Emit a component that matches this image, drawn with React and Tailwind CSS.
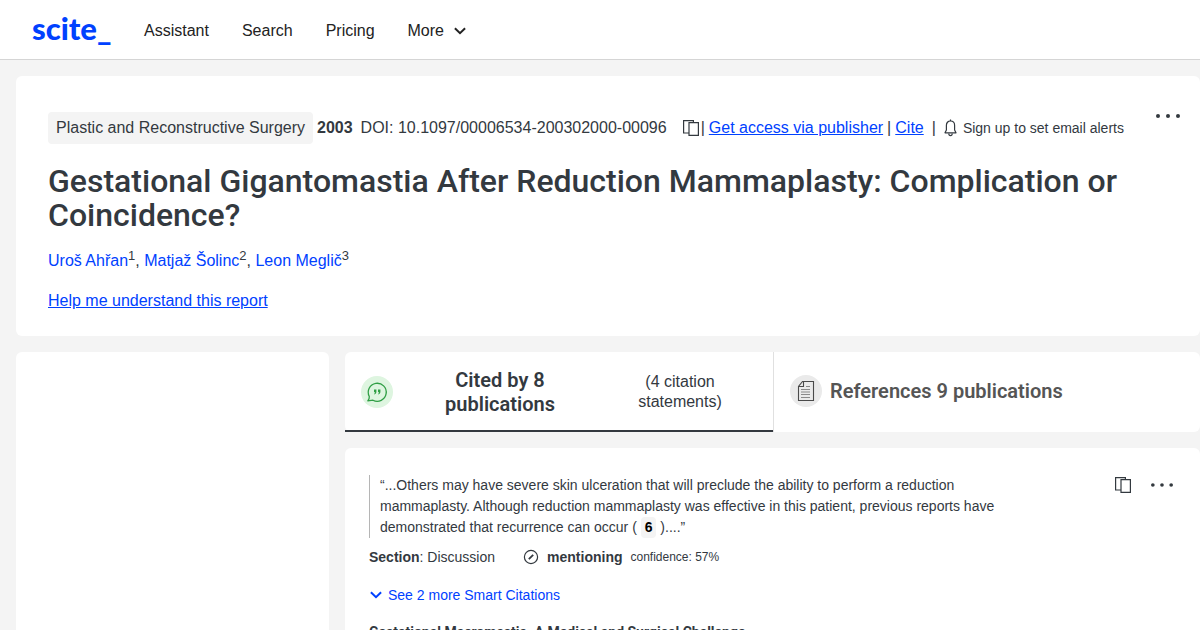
function CopyIcon() {
  return (
    <svg width="16" height="16" viewBox="0 0 16 16" fill="none" stroke="currentColor" strokeWidth="1.2">
      <path d="M6 13H0.600V0.600H10.400V2.400" />
      <path d="M6 2.600H15.400V15.400H6z" />
    </svg>
  );
}

function DotsIcon({ width }) {
  return (
    <svg width={width} height="6" viewBox="0 0 24 6" fill="currentColor">
      <circle cx="2" cy="3" r="2" />
      <circle cx="12" cy="3" r="2" />
      <circle cx="22" cy="3" r="2" />
    </svg>
  );
}

function ChevronIcon() {
  return (
    <svg width="12" height="8" viewBox="0 0 12 8" fill="none" stroke="currentColor" strokeWidth="2">
      <path d="M0.900 1.300L6 6.200L11.100 1.300" />
    </svg>
  );
}

function BellIcon() {
  return (
    <svg width="13" height="18" viewBox="0 0 13 18" fill="none" stroke="currentColor" strokeWidth="1.2">
      <path d="M6.5 2C4 2 2.4 3.900 2.400 6.300V11L1 13.800h11L10.600 11V6.300C10.600 3.900 9 2 6.500 2z" strokeLinejoin="round" />
      <path d="M6.500 0.500V2M4.800 14.500c0 2.800 3.400 2.800 3.400 0" />
    </svg>
  );
}

function QuoteBubbleIcon() {
  return (
    <svg width="32" height="32" viewBox="0 0 32 32" className="shrink-0">
      <circle cx="16" cy="16" r="16" fill="#def5e0" />
      <path d="M8.300 20.500A9 9 0 1 1 12 24.200L6.800 24.800c1-1.200 1.700-2.700 1.500-4.300z" fill="none" stroke="#2f9e44" strokeWidth="1.300" strokeLinejoin="round" />
      <path d="M13 13.500h2.400v2.300c0 1.300-.8 2.200-2 2.600l-.3-.6c.7-.3 1-.8 1-1.500H13zM17 13.500h2.400v2.300c0 1.300-.8 2.200-2 2.600l-.3-.6c.7-.3 1-.8 1-1.500H17z" fill="#2f9e44" />
    </svg>
  );
}

function DocumentIcon() {
  return (
    <svg width="32" height="32" viewBox="0 0 32 32" className="shrink-0">
      <circle cx="16" cy="16" r="16" fill="#eaeaea" />
      <path d="M12.500 6.500h11v19h-15v-14z M13.500 6.500v5h-5" fill="none" stroke="#4a4a4a" strokeWidth="1.100" />
      <path d="M16 11.500h4M11 14.500h9M11 17h9M11 19.500h9M11 22.500h9" stroke="#8a8a8a" strokeWidth="1" />
    </svg>
  );
}

function MentioningIcon() {
  return (
    <svg width="16" height="16" viewBox="0 0 16 16" fill="none" stroke="currentColor">
      <circle cx="8" cy="8" r="6.600" strokeWidth="1.200" />
      <path d="M5.800 10.200l4.400-4.400" strokeWidth="1.800" />
    </svg>
  );
}

const navLinks = ["Assistant", "Search", "Pricing"];

const authors = [
  { name: "Uroš Ahřan", ref: 1 },
  { name: "Matjaž Šolinc", ref: 2 },
  { name: "Leon Meglič", ref: 3 },
];

function Header() {
  return (
    <header className="flex h-[60px] shrink-0 items-center border-b border-[#d5d5d5] bg-white px-8 pt-0.5 text-[#222]">
      <a href="#" className="w-20 pb-1.5 font-['Lato',sans-serif] text-[31px] leading-8 font-black text-[#0041ff]">
        scite_
      </a>
      <nav className="ml-8 flex items-center gap-[33px]">
        {navLinks.map((label) => (
          <a key={label} href="#">
            {label}
          </a>
        ))}
        <button type="button" className="flex items-center gap-2.5">
          More
          <ChevronIcon />
        </button>
      </nav>
    </header>
  );
}

function PaperCard() {
  return (
    <section className="flex shrink-0 items-start rounded-md bg-white pt-9 pr-5 pb-[23px] pl-8">
      <div className="min-w-0 flex-1">
        <div className="flex items-center whitespace-nowrap">
          <span className="rounded bg-[#f4f4f4] px-2 py-1">Plastic and Reconstructive Surgery</span>
          <b className="ml-1">2003</b>
          <span className="ml-2">DOI: 10.1097/00006534-200302000-00096</span>
          <button type="button" aria-label="Copy DOI" className="ml-4">
            <CopyIcon />
          </button>
          <span className="ml-0.5">|</span>
          <a href="#" className="ml-1 text-[#0041ff] underline">Get access via publisher</a>
          <span className="ml-1">|</span>
          <a href="#" className="ml-1 text-[#0041ff] underline">Cite</a>
          <span className="ml-2">|</span>
          <button type="button" className="ml-2 flex items-center gap-1.5 text-sm">
            <BellIcon />
            Sign up to set email alerts
          </button>
        </div>
        <h1 className="mt-5 font-['Roboto',sans-serif] text-[32px] leading-[34px] font-medium">
          Gestational Gigantomastia After Reduction Mammaplasty: Complication or Coincidence?
        </h1>
        <p className="mt-[17px]">
          {authors.map((author, i) => (
            <span key={author.ref}>
              {i > 0 && ", "}
              <a href="#" className="text-[#0041ff]">{author.name}</a>
              <sup className="text-[13px]">{author.ref}</sup>
            </span>
          ))}
        </p>
        <a href="#" className="mt-4 inline-block text-[#0041ff] underline">Help me understand this report</a>
      </div>
      <button type="button" aria-label="More options" className="flex pt-px">
        <DotsIcon width={24} />
      </button>
    </section>
  );
}

function Tabs() {
  return (
    <div className="grid h-20 grid-cols-[1fr_427px] rounded-md bg-white">
      <button type="button" className="flex items-center border-b-2 border-[#33393f] px-4 pt-0.5">
        <QuoteBubbleIcon />
        <span className="flex-1 pr-9 pl-10 font-['Roboto',sans-serif] text-xl leading-6 font-semibold">
          Cited by 8 publications
        </span>
        <span className="w-[154px] px-8 leading-5">(4 citation statements)</span>
      </button>
      <button type="button" className="flex items-center gap-2 border-l border-[#e0e0e0] px-4 pb-0.5 text-[#555]">
        <DocumentIcon />
        <span className="font-['Roboto',sans-serif] text-xl font-semibold">References 9 publications</span>
      </button>
    </div>
  );
}

function Citation() {
  return (
    <article className="mt-4 flex-1 rounded-md bg-white px-6 pt-[27px] text-sm">
      <div className="flex items-start">
        <blockquote className="max-w-[652px] border-l border-[#b5b5b5] pl-[10px] leading-[21px]">
          “...Others may have severe skin ulceration that will preclude the ability to perform a reduction
          mammaplasty. Although reduction mammaplasty was effective in this patient, previous reports have
          demonstrated that recurrence can occur ({" "}
          <a href="#" className="inline-block rounded bg-[#f4f4f4] px-1 font-bold text-black">6</a> )....”
        </blockquote>
        <div className="mr-[3px] ml-auto flex items-center gap-5 pt-0.5">
          <button type="button" aria-label="Copy citation">
            <CopyIcon />
          </button>
          <button type="button" aria-label="Citation options">
            <DotsIcon width={22} />
          </button>
        </div>
      </div>
      <div className="mt-[7px] flex items-center leading-6">
        <span><b>Section</b>: Discussion</span>
        <span className="ml-7 flex items-center gap-2">
          <MentioningIcon />
          <b>mentioning</b>
          <span className="text-xs">confidence: 57%</span>
        </span>
      </div>
      <button type="button" className="mt-[14px] flex items-center gap-1.5 pl-px leading-6 text-[#0041ff]">
        <ChevronIcon />
        See 2 more Smart Citations
      </button>
      <h2 className="mt-[13px] font-['Roboto',sans-serif] leading-6 font-bold">
        Gestational Macromastia. A Medical and Surgical Challenge
      </h2>
    </article>
  );
}

export default function App() {
  return (
    <div className="flex h-screen flex-col overflow-hidden bg-[#f4f4f4] font-['Liberation_Sans',Arial,sans-serif] text-base text-[#33393f]">
      <Header />
      <main className="flex flex-1 flex-col gap-4 pt-4 pl-4">
        <PaperCard />
        <div className="flex flex-1 gap-4">
          <aside className="w-[313px] shrink-0 rounded-t-md bg-white" />
          <div className="flex min-w-0 flex-1 flex-col">
            <Tabs />
            <Citation />
          </div>
        </div>
      </main>
    </div>
  );
}
